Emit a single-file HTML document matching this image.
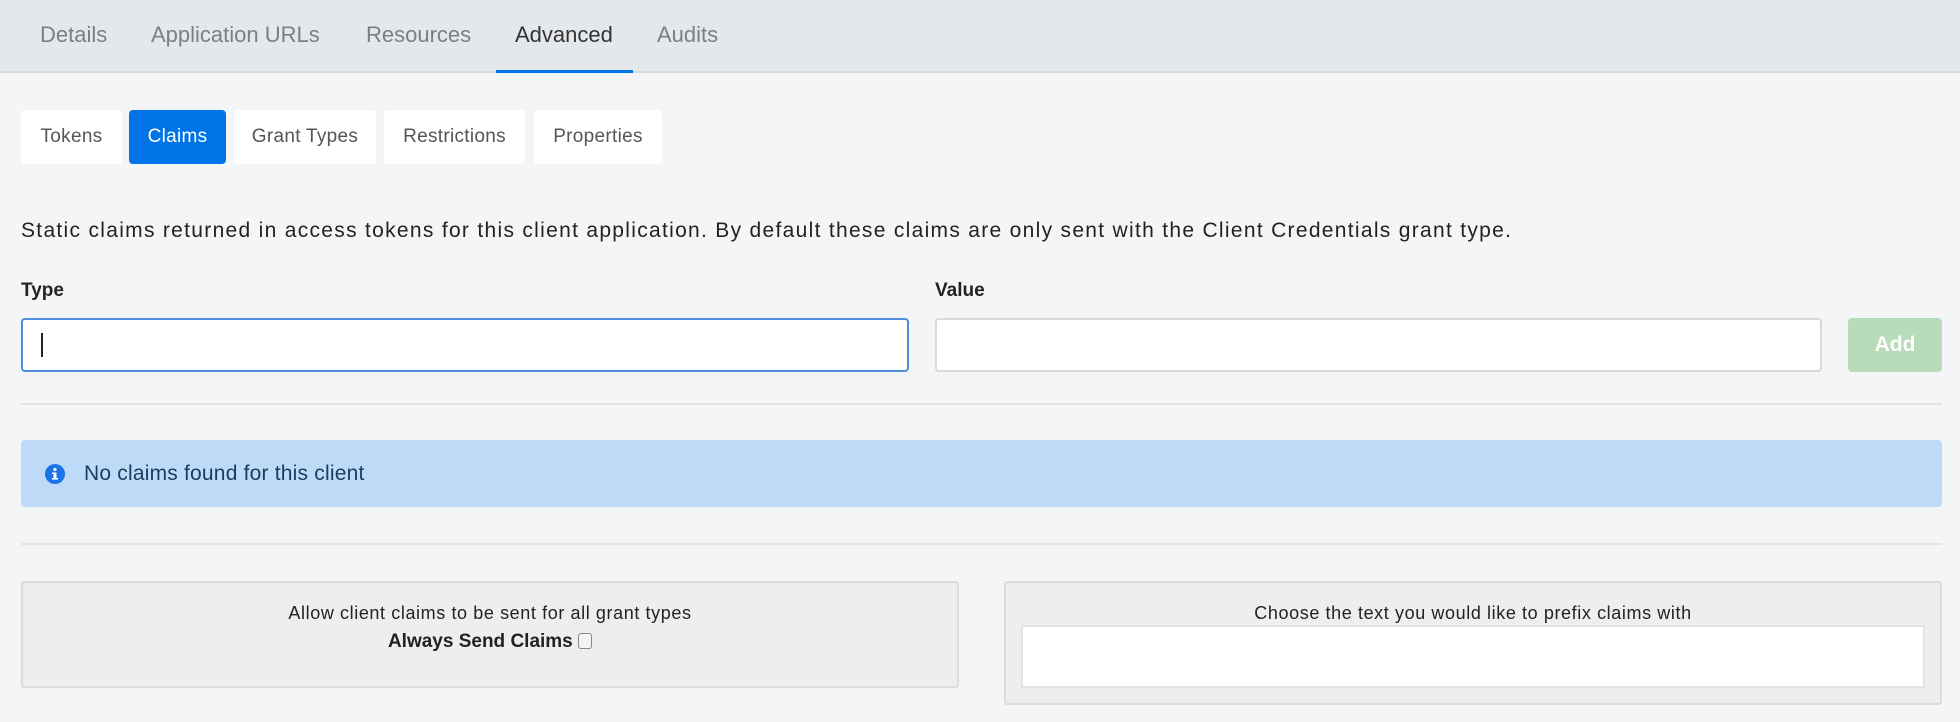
<!DOCTYPE html>
<html><head><meta charset="utf-8"><style>
*{box-sizing:border-box;margin:0;padding:0}
body{width:1960px;height:722px;background:#f4f5f7;font-family:"Liberation Sans",sans-serif;position:relative;overflow:hidden;color:#222}
.hdr{position:absolute;left:0;top:0;width:1960px;height:73px;background:#e5e8eb;border-bottom:2px solid #d5d9de}
.t{position:absolute;top:22px;font-size:22px;color:#7b7f84}
.ul{position:absolute;left:496px;top:70px;width:137px;height:3px;background:#0073e6}
.st{position:absolute;top:110px;height:54px;background:#fff;border-radius:4px;font-size:19px;color:#555;line-height:54px;text-align:center;letter-spacing:0.3px}
.abs{position:absolute}
.inp{position:absolute;background:#fff;border:2px solid #d7d9dc;border-radius:4px}
.hr{position:absolute;left:21px;width:1921px;height:2px;background:#e3e4e6}
.box{position:absolute;background:#eeeeee;border:2px solid #dcdcdc;border-radius:3px;text-align:center;font-size:18px}
</style></head><body>
<div class="hdr"></div>
<div class="t" style="left:40px">Details</div>
<div class="t" style="left:151px">Application URLs</div>
<div class="t" style="left:366px">Resources</div>
<div class="t" style="left:515px;color:#333">Advanced</div>
<div class="t" style="left:657px">Audits</div>
<div class="ul"></div>

<div class="st" style="left:21px;width:101px">Tokens</div>
<div class="st" style="left:129px;width:97px;background:#0073e6;color:#fff">Claims</div>
<div class="st" style="left:234px;width:142px">Grant Types</div>
<div class="st" style="left:384px;width:141px">Restrictions</div>
<div class="st" style="left:534px;width:128px">Properties</div>

<div class="abs" style="left:21px;top:219px;font-size:21px;letter-spacing:1.3px;color:#222;white-space:nowrap">Static claims returned in access tokens for this client application. By default these claims are only sent with the Client Credentials grant type.</div>
<div class="abs" style="left:21px;top:280px;font-size:19px;font-weight:bold">Type</div>
<div class="abs" style="left:935px;top:280px;font-size:19px;font-weight:bold">Value</div>
<div class="inp" style="left:21px;top:318px;width:888px;height:54px;border-color:#4d8fdc"><div style="position:absolute;left:18px;top:13px;width:1.5px;height:24px;background:#222"></div></div>
<div class="inp" style="left:935px;top:318px;width:887px;height:54px"></div>
<div class="abs" style="left:1848px;top:318px;width:94px;height:54px;background:#b8dbb9;border-radius:4px;color:#fff;font-weight:bold;font-size:21px;line-height:54px;text-align:center">Add</div>
<div class="hr" style="top:403px"></div>

<div class="abs" style="left:21px;top:440px;width:1921px;height:67px;background:#bddbf7;border-radius:4px">
<svg class="abs" style="left:24px;top:24px" width="20" height="20" viewBox="0 0 20 20"><circle cx="10" cy="10" r="10" fill="#1a73e8"/><rect x="8.5" y="8.5" width="3" height="7" fill="#fff"/><rect x="7" y="14" width="6" height="1.6" fill="#fff"/><rect x="7" y="8.5" width="3" height="1.5" fill="#fff"/><circle cx="10" cy="5.5" r="1.6" fill="#fff"/></svg>
<div class="abs" style="left:63px;top:22px;font-size:21px;letter-spacing:0.2px;color:#1d3a5f">No claims found for this client</div>
</div>
<div class="hr" style="top:543px"></div>

<div class="box" style="left:21px;top:581px;width:938px;height:107px">
<div style="margin-top:20px;letter-spacing:0.6px;white-space:nowrap">Allow client claims to be sent for all grant types</div>
<div style="margin-top:7px;font-weight:bold;font-size:19px">Always Send Claims <span style="display:inline-block;width:14px;height:16px;border:1.5px solid #888;border-radius:3px;background:#f4f4f4;vertical-align:-2px"></span></div>
</div>
<div class="box" style="left:1004px;top:581px;width:938px;height:124px">
<div style="margin-top:20px;letter-spacing:0.6px;white-space:nowrap">Choose the text you would like to prefix claims with</div>
<div style="position:absolute;left:15px;top:42px;width:904px;height:63px;background:#fff;border:2px solid #e2e2e2"></div>
</div>
</body></html>
